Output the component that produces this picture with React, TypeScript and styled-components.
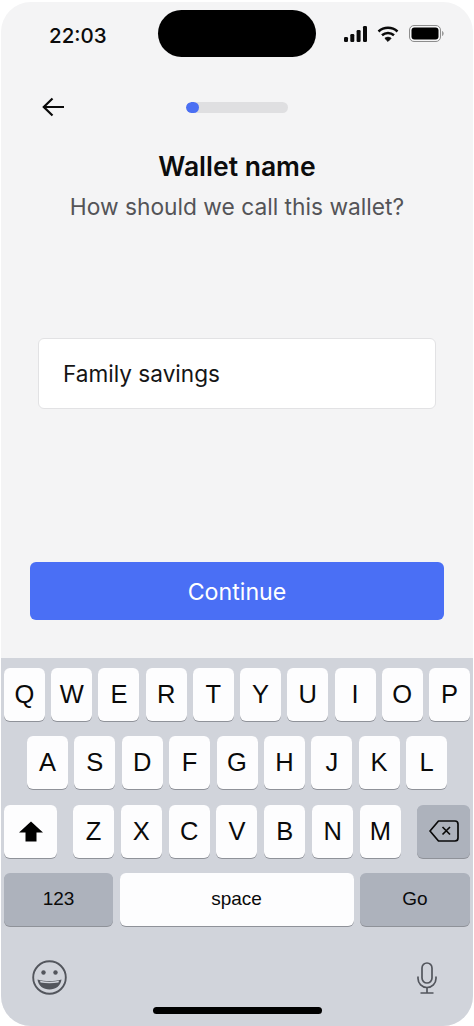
import styled, { createGlobalStyle } from 'styled-components';

const GlobalStyle = createGlobalStyle`
  html, body {
    margin: 0;
    padding: 0;
    background: #ffffff;
  }
  * {
    box-sizing: border-box;
  }
`;

const Phone = styled.div`
  width: 472px;
  height: 1024px;
  margin: 2px 0 0 1px;
  border-radius: 30px;
  overflow: hidden;
  background: #f4f4f5;
  display: flex;
  flex-direction: column;
  font-family: Inter, 'Liberation Sans', sans-serif;
`;

const StatusBar = styled.div`
  height: 55px;
  padding: 8px 27px 0 48px;
  display: flex;
  align-items: center;
`;

const Time = styled.span`
  width: 109px;
  padding-top: 4px;
  font-size: 20.5px;
  font-weight: 500;
  color: #0b0b0b;
`;

const Island = styled.div`
  width: 158px;
  height: 47px;
  border-radius: 24px;
  background: #000;
`;

const StatusIcons = styled.div`
  width: 100px;
  margin-left: 28px;
  display: flex;
  align-items: center;
  justify-content: space-between;
`;

const Nav = styled.div`
  height: 22px;
  margin-top: 39px;
  padding: 0 0 0 40px;
  display: flex;
  align-items: center;
`;

const Track = styled.div`
  width: 102px;
  height: 11px;
  margin-left: 121px;
  border-radius: 6px;
  background: #dfdfe1;
  overflow: hidden;
`;

const Fill = styled.div`
  height: 100%;
  border-radius: 6px;
  background: #4a6ff3;
`;

const Title = styled.h1`
  margin: 32px 0 0;
  font-size: 26.5px;
  line-height: 32px;
  font-weight: 600;
  text-align: center;
  color: #0c0c0c;
`;

const Subtitle = styled.p`
  margin: 11px 0 0;
  font-size: 22.75px;
  line-height: 28px;
  font-weight: 400;
  text-align: center;
  color: #545458;
`;

const InputBox = styled.div`
  width: 398px;
  height: 71px;
  margin: 117px 0 0 37px;
  padding-left: 24px;
  display: flex;
  align-items: center;
  background: #fff;
  border: 1px solid #e2e2e4;
  border-radius: 6px;
  font-size: 22.6px;
  color: #151515;
`;

const ContinueButton = styled.button`
  width: 414px;
  height: 58px;
  margin: 153px 0 0 29px;
  padding: 1px 0 0;
  border: 0;
  border-radius: 6px;
  background: #4a6ff5;
  color: #fff;
  font-family: inherit;
  font-size: 23.2px;
  font-weight: 400;
`;

const Keyboard = styled.div`
  flex: 1;
  margin-top: 38px;
  padding: 10px 3px 0;
  background: #d1d4db;
  display: flex;
  flex-direction: column;
  gap: 15.3px;
  font-family: 'Liberation Sans', Arial, sans-serif;
`;

const KeyRow = styled.div<{ $inset?: number }>`
  display: flex;
  justify-content: space-between;
  padding: 0 ${(p) => p.$inset ?? 0}px;
`;

const Key = styled.div<{ $width?: number; $dark?: boolean; $size?: number }>`
  width: ${(p) => p.$width ?? 41}px;
  height: 53px;
  flex: none;
  display: flex;
  align-items: center;
  justify-content: center;
  border-radius: 6px;
  background: ${(p) => (p.$dark ? '#adb2bc' : '#fdfdfe')};
  box-shadow: 0 1px 0 #8f9299;
  font-size: ${(p) => p.$size ?? 25.5}px;
  color: #0a0a0a;
`;

const LetterGroup = styled.div`
  width: 328px;
  display: flex;
  justify-content: space-between;
`;

const KeyboardFooter = styled.div`
  margin-top: 19px;
  padding: 0 33px 0 28px;
  display: flex;
  align-items: center;
  justify-content: space-between;
`;

const HomeBar = styled.div`
  width: 169px;
  height: 7px;
  margin: 12px auto 0;
  border-radius: 4px;
  background: #000;
`;

const rowOne = ['Q', 'W', 'E', 'R', 'T', 'Y', 'U', 'I', 'O', 'P'];
const rowTwo = ['A', 'S', 'D', 'F', 'G', 'H', 'J', 'K', 'L'];
const rowThree = ['Z', 'X', 'C', 'V', 'B', 'N', 'M'];

function SignalIcon() {
  return (
    <svg width="23" height="16" viewBox="0 0 23 16" fill="#0a0a0a">
      <rect x="0" y="11" width="4" height="5" rx="1.2" />
      <rect x="6.3" y="8" width="4" height="8" rx="1.2" />
      <rect x="12.6" y="4" width="4" height="12" rx="1.2" />
      <rect x="19" y="0" width="4" height="16" rx="1.2" />
    </svg>
  );
}

function WifiIcon() {
  return (
    <svg width="22" height="16" viewBox="0 0 22 16" fill="none" stroke="#0a0a0a" strokeWidth="2.6">
      <path d="M1.5 5.4C7 .6 15 .6 20.5 5.4" />
      <path d="M5 9.2c3.5-3 8.5-3 12 0" />
      <path d="M11 15.4 7.9 12.3c1.8-1.4 4.4-1.4 6.2 0Z" fill="#0a0a0a" strokeWidth="1" />
    </svg>
  );
}

function BatteryIcon() {
  return (
    <svg width="35" height="17" viewBox="0 0 35 17">
      <rect x="0.5" y="0.5" width="31" height="16" rx="4.5" fill="none" stroke="#8d8d8d" />
      <rect x="2.5" y="2.5" width="27" height="12" rx="3" fill="#000" />
      <path d="M33 6v5c1-.3 1.7-1.4 1.7-2.500S34 6.300 33 6Z" fill="#9a9a9a" />
    </svg>
  );
}

function BackArrow() {
  return (
    <svg width="24" height="22" viewBox="0 0 24 22" fill="none" stroke="#0a0a0a" strokeWidth="2.2">
      <path d="M23 11H3" />
      <path d="M11.500 2.500 2.800 11l8.700 8.500" />
    </svg>
  );
}

function ShiftIcon() {
  return (
    <svg width="24" height="21" viewBox="0 0 24 21" fill="#000">
      <path d="M12 0.500 24 11.500H17.500V20.500H6.500V11.500H0Z" />
    </svg>
  );
}

function BackspaceIcon() {
  return (
    <svg width="30" height="22" viewBox="0 0 30 22" fill="none" stroke="#0a0a0a" strokeWidth="1.700">
      <path d="M9.500 1H26a3 3 0 0 1 3 3v14a3 3 0 0 1-3 3H9.500L1 11Z" strokeLinejoin="round" />
      <path d="m13.500 7 7.500 7.500M21 7l-7.500 7.500" />
    </svg>
  );
}

function EmojiIcon() {
  return (
    <svg width="35" height="35" viewBox="0 0 35 35">
      <circle cx="17.500" cy="17.500" r="16.300" fill="none" stroke="#53565d" strokeWidth="1.900" />
      <circle cx="11.500" cy="12.500" r="2.200" fill="#53565d" />
      <circle cx="23.500" cy="12.500" r="2.200" fill="#53565d" />
      <path d="M5.500 19.500c7.500 2 16.500 2 24 0-.8 6.500-5.800 10-12 10s-11.200-3.500-12-10Z" fill="#53565d" />
      <path d="M8 20.800c6 1.200 13 1.200 19 0l-.5 1.700c-5.500 1-12.500 1-18 0Z" fill="#d1d4db" />
    </svg>
  );
}

function MicIcon() {
  return (
    <svg width="20" height="32" viewBox="0 0 20 32" fill="none" stroke="#53565d" strokeWidth="1.700">
      <rect x="5" y="1" width="10" height="20" rx="5" />
      <path d="M1 14.500v2a9 9 0 0 0 18 0v-2" />
      <path d="M10 25.500V31M3.500 31h13" />
    </svg>
  );
}

export default function App() {
  return (
    <>
      <GlobalStyle />
      <Phone>
        <StatusBar>
          <Time>22:03</Time>
          <Island />
          <StatusIcons>
            <SignalIcon />
            <WifiIcon />
            <BatteryIcon />
          </StatusIcons>
        </StatusBar>
        <Nav>
          <BackArrow />
          <Track>
            <Fill style={{ width: `${(13 / 102) * 100}%` }} />
          </Track>
        </Nav>
        <Title>Wallet name</Title>
        <Subtitle>How should we call this wallet?</Subtitle>
        <InputBox>Family savings</InputBox>
        <ContinueButton>Continue</ContinueButton>
        <Keyboard>
          <KeyRow>
            {rowOne.map((k) => (
              <Key key={k}>{k}</Key>
            ))}
          </KeyRow>
          <KeyRow $inset={23}>
            {rowTwo.map((k) => (
              <Key key={k}>{k}</Key>
            ))}
          </KeyRow>
          <KeyRow>
            <Key $width={53}>
              <ShiftIcon />
            </Key>
            <LetterGroup>
              {rowThree.map((k) => (
                <Key key={k}>{k}</Key>
              ))}
            </LetterGroup>
            <Key $width={53} $dark>
              <BackspaceIcon />
            </Key>
          </KeyRow>
          <KeyRow>
            <Key $width={109} $dark $size={19}>123</Key>
            <Key $width={234} $size={19}>space</Key>
            <Key $width={110} $dark $size={19}>Go</Key>
          </KeyRow>
          <div>
            <KeyboardFooter>
              <EmojiIcon />
              <MicIcon />
            </KeyboardFooter>
            <HomeBar />
          </div>
        </Keyboard>
      </Phone>
    </>
  );
}
